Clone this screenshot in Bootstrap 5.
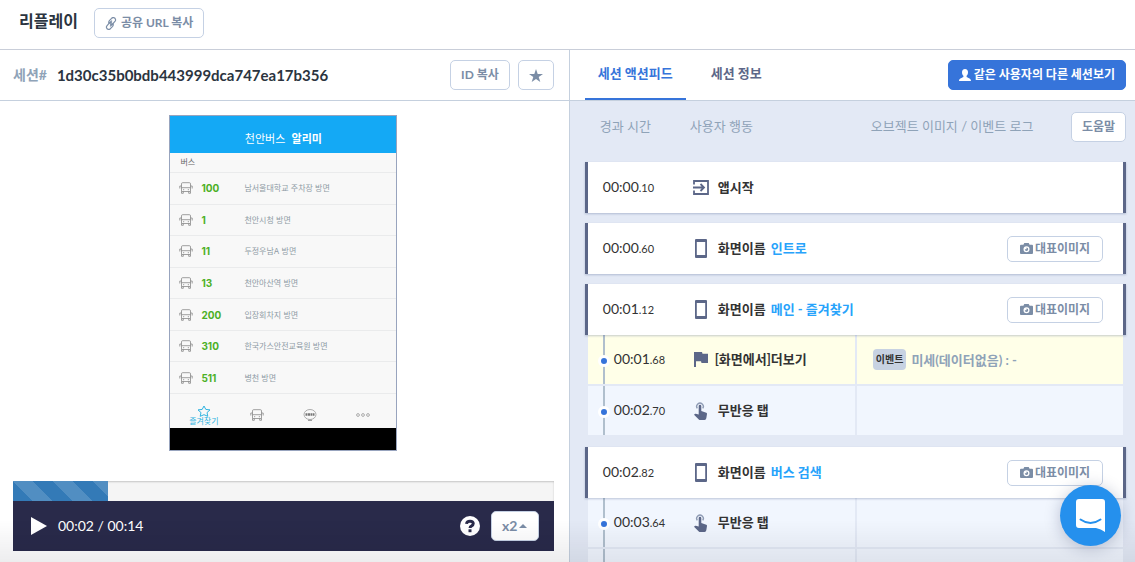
<!DOCTYPE html>
<html lang="ko">
<head>
<meta charset="utf-8">
<meta name="viewport" content="width=device-width, initial-scale=1">
<title>리플레이</title>
<link href="https://cdn.jsdelivr.net/npm/bootstrap@5.3.0/dist/css/bootstrap.min.css" rel="stylesheet">
<style>
  :root { --line: #c5d0de; --slate: #5c6788; --muted: #8fa3b8; --soft: #7b8da6; --blue: #3674da; --sky: #27a3fb; --feed: #e3e9f5; }
  body { font-family: Lato, "Noto Sans CJK KR", sans-serif; font-size: 13px; line-height: 20px; color: #333; background: #fff; }
  svg { display: block; flex: none; }
  a { text-decoration: none; }
  .mb-10 { margin-bottom: 10px; }
  .mb-12 { margin-bottom: 12px; }

  .app-bar { height: 50px; padding: 8px 19px 11px; border-bottom: 1px solid #c9ced9; }
  .app-title { font-size: 16px; font-weight: 700; color: #2b3440; line-height: 26px; }
  .pane-bar { height: 51px; border-bottom: 1px solid var(--line); flex: none; }
  .btn-line { --bs-btn-color: var(--soft); --bs-btn-bg: #fff; --bs-btn-border-color: #c5d1e4; --bs-btn-hover-color: var(--slate); --bs-btn-hover-border-color: #a9b8d0; --bs-btn-hover-bg: #fff; }
  .btn-tool { height: 30px; padding: 0 10px; font-size: 12px; font-weight: 700; border-radius: 5px; display: inline-flex; align-items: center; justify-content: center; line-height: 18px; white-space: nowrap; }
  .btn-thumb { height: 26px; width: 96px; padding: 0; gap: 2px; }
  .btn-user { --bs-btn-color: #fff; --bs-btn-bg: var(--blue); --bs-btn-border-color: var(--blue); --bs-btn-hover-color: #fff; --bs-btn-hover-bg: #2c63c0; gap: 3px; }
  .session-label { color: var(--muted); font-weight: 700; font-size: 14px; }
  .session-id { font-size: 15px; font-weight: 700; color: #2b3440; margin-left: 10px; }
  .pane-player { width: 50.2%; border-right: 1px solid var(--line); }
  .player-side { padding-left: 13px; padding-right: 15px; }

  .phone { width: 228px; height: 336px; margin-top: 14px; border: 1px solid #98a4be; background: #f8f8f8; font-family: Inter, "Noto Sans CJK KR", sans-serif; }
  .phone-head { height: 37px; background: #14a9f5; color: #fff; font-size: 11px; line-height: 16px; padding-top: 15px; }
  .phone-sub { height: 19px; padding-left: 10px; font-size: 8px; line-height: 19px; color: #666; }
  .phone-row { border-top: 1px solid #eaebec; padding-left: 9px; }
  .route-no { width: 43px; margin-left: 8px; font-size: 10px; font-weight: 700; color: #4cb026; }
  .route-to { font-size: 8px; color: #8e9ba5; }
  .phone-nav { height: 35px; border-top: 1px solid #eaebec; padding: 0 7px; }
  .phone-nav > div { flex: 1; color: #999; }
  .phone-nav .now { color: #2fb3e0; font-size: 8px; line-height: 8px; }
  .phone-foot { height: 22px; background: #000; }

  .player { margin-top: 30px; }
  .play-track { height: 20px; border-radius: 0; background: #f5f5f5; box-shadow: inset 0 1px 2px rgba(0,0,0,.2); }
  .play-done { background-color: #337ab7; background-size: 40px 40px; background-image: linear-gradient(45deg, rgba(255,255,255,.15) 25%, transparent 25%, transparent 50%, rgba(255,255,255,.15) 50%, rgba(255,255,255,.15) 75%, transparent 75%, transparent); }
  .play-bar { height: 50px; background: #292a4a; padding: 0 15px 0 18px; gap: 11px; color: #fff; font-size: 14px; }
  .btn-plain { border: 0; padding: 0; background: none; color: #fff; }
  .btn-speed { width: 48px; gap: 2px; font-size: 14px; }

  .feed { background: var(--feed); }
  .feed-side { padding-left: 15px; padding-right: 9px; }
  .feed-tabs { gap: 12px; }
  .feed-tab { color: var(--slate); font-weight: 700; padding: 13px 13px 0; height: 50px; border-bottom: 2px solid transparent; }
  .feed-tab.active { color: var(--blue); border-color: var(--blue); }
  .feed-cols { height: 61px; padding: 11px 0 20px 15px; color: var(--muted); }
  .col-time { width: 90px; flex: none; }
  .col-act { width: 181px; flex: none; }
  .step { height: 51px; background: #fff; border: solid var(--slate); border-width: 0 3px; padding: 0 20px 0 15px; box-shadow: 0 1px 2px rgba(60,80,130,.3); position: relative; }
  .clock { font-size: 14px; width: 89px; flex: none; }
  .clock small { font-size: 11px; }
  .act-name { font-weight: 700; padding-bottom: 2px; }
  .act-name a { color: var(--sky); margin-left: 2px; }
  .act-icon { width: 18px; margin-right: 8px; display: flex; justify-content: center; color: var(--slate); }
  .act-icon.flag { margin-right: 5px; }
  .sub { height: 49px; margin: 0 3px; gap: 2px; }
  .sub + .sub { margin-top: 2px; }
  .sub-act { width: 267px; flex: none; background: #f1f6fe; padding-left: 15px; }
  .sub-log { background: #f1f6fe; padding-left: 16px; }
  .sub.hot > div { background: #ffffe8; }
  .rail { width: 2px; background: #b0bfcd; flex: none; margin-right: 9px; display: flex; align-items: center; justify-content: center; }
  .rail i { width: 12px; height: 12px; border: 3px solid #fff; border-radius: 50%; background: var(--blue); flex: none; margin-top: 2px; }
  .sub .clock { width: 78px; }
  .tag { background: #c7d2e2; color: #333; font-size: 10px; font-weight: 700; border-radius: 4px; height: 21px; line-height: 20px; padding: 0 3px; margin-right: 5px; }
  .log-text { color: var(--muted); font-weight: 700; }

  .chat { right: 14px; bottom: 16px; width: 61px; height: 61px; border: 0; border-radius: 50%; background: #2590ed; box-shadow: 0 2px 16px rgba(20,30,80,.25); padding: 0; z-index: 5; }
  .shade { height: 42px; background: linear-gradient(rgba(0,0,20,0), rgba(0,0,20,.07)); pointer-events: none; z-index: 4; }
</style>
</head>
<body class="vh-100 overflow-hidden d-flex flex-column">
<svg width="0" height="0" class="position-absolute" aria-hidden="true">
  <symbol id="bus" viewBox="0 0 14 12"><path d="M2.500 9.500V1.800Q2.500.7 3.600.7h6.800q1.100 0 1.100 1.100v7.700zM2.500 5.700h9M2.500 9.500v1.800h1.800V9.500M9.700 9.500v1.800h1.800V9.500M2.500 4H.8v2.500M11.500 4h1.700v2.500M4 7.700h1.200M8.800 7.700H10" fill="none" stroke="#888" stroke-width=".8"/></symbol>
  <symbol id="device" viewBox="0 0 12 19"><path fill="currentColor" fill-rule="evenodd" d="M1 0h10q1 0 1 1v17q0 1-1 1H1q-1 0-1-1V1Q0 0 1 0zm.8 3v13h8.400V3z"/></symbol>
  <symbol id="tap" viewBox="0 0 14 18"><path d="M3.300 6.300a3.300 3.300 0 1 1 5.400 0" fill="none" stroke="#8d9ab3" stroke-width="1.400"/><path fill="currentColor" d="M4.700 4a1.300 1.300 0 0 1 2.600 0v5l5 1.700q.9.400.7 1.400l-.7 4.200Q12 18 10.600 18H6.200q-.8 0-1.400-.6L0 12.700l.8-.8q.4-.4 1-.2l2.900.8z"/></symbol>
  <symbol id="camera" viewBox="0 0 13 11"><path fill="currentColor" fill-rule="evenodd" d="M4.300 0h4.400l.9 1.800H12q1 0 1 1V10q0 1-1 1H1q-1 0-1-1V2.800q0-1 1-1h2.400zM6.500 3.300a3 3 0 1 0 0 6 3 3 0 0 0 0-6zm0 1.300a1.700 1.700 0 1 1-1.700 1.700h1.700z"/></symbol>
</svg>

<header class="app-bar d-flex align-items-start flex-shrink-0">
  <h1 class="app-title m-0 me-3">리플레이</h1>
  <button type="button" class="btn btn-line btn-tool gap-1">
    <svg width="12" height="13" viewBox="0 0 12 13" fill="none" stroke="currentColor" stroke-width="1.200"><path d="M4.200 6.500Q3.200 5 4.400 3.600L6.600 1.400a2.200 2.200 0 0 1 3.900.9q.3 1-.4 1.900L7.600 7.100a1.500 1.500 0 0 1-2.300-1.900L7 3.600"/><path d="M7.800 6.500q1 1.500-.2 2.900l-2.200 2.200a2.200 2.200 0 0 1-3.900-.9q-.3-1 .4-1.900l2.500-2.900a1.500 1.500 0 0 1 2.300 1.900L5 9.400"/></svg>
    <span>공유 URL 복사</span>
  </button>
</header>

<main class="row g-0 flex-grow-1 overflow-hidden">
  <section class="col-auto pane-player d-flex flex-column">
    <div class="pane-bar player-side d-flex align-items-center">
      <span class="session-label">세션#</span>
      <span class="session-id me-auto">1d30c35b0bdb443999dca747ea17b356</span>
      <button type="button" class="btn btn-line btn-tool me-2">ID 복사</button>
      <button type="button" class="btn btn-line btn-tool" aria-label="즐겨찾기">
        <svg width="14" height="13" viewBox="0 0 14 13"><path fill="currentColor" d="m7 0 1.700 4.900H14L9.700 8l1.600 5L7 9.900 2.700 13l1.600-5L0 4.900h5.300z"/></svg>
      </button>
    </div>
    <div class="player-side flex-grow-1 d-flex flex-column">
      <div class="phone mx-auto d-flex flex-column">
        <div class="phone-head text-center">천안버스 &nbsp;<b>알리미</b></div>
        <div class="phone-sub">버스</div>
        <div class="flex-grow-1 d-flex flex-column">
          <div class="phone-row flex-fill d-flex align-items-center"><svg width="14" height="12"><use href="#bus"/></svg><span class="route-no">100</span><span class="route-to">남서울대학교 주차장 방면</span></div>
          <div class="phone-row flex-fill d-flex align-items-center"><svg width="14" height="12"><use href="#bus"/></svg><span class="route-no">1</span><span class="route-to">천안시청 방면</span></div>
          <div class="phone-row flex-fill d-flex align-items-center"><svg width="14" height="12"><use href="#bus"/></svg><span class="route-no">11</span><span class="route-to">두정우남A 방면</span></div>
          <div class="phone-row flex-fill d-flex align-items-center"><svg width="14" height="12"><use href="#bus"/></svg><span class="route-no">13</span><span class="route-to">천안아산역 방면</span></div>
          <div class="phone-row flex-fill d-flex align-items-center"><svg width="14" height="12"><use href="#bus"/></svg><span class="route-no">200</span><span class="route-to">입장회차지 방면</span></div>
          <div class="phone-row flex-fill d-flex align-items-center"><svg width="14" height="12"><use href="#bus"/></svg><span class="route-no">310</span><span class="route-to">한국가스안전교육원 방면</span></div>
          <div class="phone-row flex-fill d-flex align-items-center"><svg width="14" height="12"><use href="#bus"/></svg><span class="route-no">511</span><span class="route-to">병천 방면</span></div>
        </div>
        <div class="phone-nav d-flex align-items-center">
          <div class="now d-flex flex-column align-items-center pt-2"><svg width="14" height="12" viewBox="0 0 14 12" fill="none" stroke="currentColor"><path d="m7 1 1.800 3.400 4.200.5-3 2.700.8 3.700L7 9.700l-3.800 1.600.8-3.700-3-2.700 4.200-.5z"/></svg>즐겨찾기</div>
          <div class="d-flex justify-content-center pt-2"><svg width="14" height="12"><use href="#bus"/></svg></div>
          <div class="d-flex justify-content-center pt-2"><svg width="14" height="12" viewBox="0 0 14 12"><ellipse cx="7" cy="5.500" rx="6" ry="5" fill="none" stroke="#999" stroke-width=".8"/><path d="M2.500 5.500h9" stroke="#777" stroke-width="2.500" stroke-dasharray="2 .5"/><path d="M5 11.300h4" stroke="#888"/></svg></div>
          <div class="d-flex justify-content-center pt-2"><svg width="14" height="6" viewBox="0 0 14 6" fill="none" stroke="#999" stroke-width=".8"><circle cx="2" cy="3" r="1.400"/><circle cx="7" cy="3" r="1.400"/><circle cx="12" cy="3" r="1.400"/></svg></div>
        </div>
        <div class="phone-foot"></div>
      </div>
      <div class="player">
        <div class="play-track progress"><div class="play-done progress-bar" role="progressbar" aria-label="재생 위치" aria-valuenow="17" aria-valuemin="0" aria-valuemax="100" style="width:17.500%"></div></div>
        <div class="play-bar d-flex align-items-center">
          <button type="button" class="btn-plain" aria-label="재생"><svg width="16" height="18" viewBox="0 0 16 18"><path fill="#fff" d="m0 0 16 9-16 9z"/></svg></button>
          <span class="me-auto">00:02 / 00:14</span>
          <button type="button" class="btn-plain" aria-label="도움말"><svg width="20" height="20" viewBox="0 0 20 20"><circle cx="10" cy="10" r="10" fill="#fff"/><path d="M6.500 7.800Q6.800 5.200 10 5.200t3.300 2.400q0 1.400-1.700 2.300-1.600.8-1.600 2.100" fill="none" stroke="#292a4a" stroke-width="2.900"/><path fill="#292a4a" d="M8.500 13.300h3v2.900h-3z"/></svg></button>
          <button type="button" class="btn btn-line btn-tool btn-speed">x2<svg width="8" height="4" viewBox="0 0 8 4"><path fill="currentColor" d="M0 4 4 0l4 4z"/></svg></button>
        </div>
      </div>
    </div>
  </section>

  <section class="col feed d-flex flex-column overflow-hidden">
    <div class="pane-bar feed-side bg-white d-flex">
      <nav class="feed-tabs d-flex me-auto">
        <a href="#feed" class="feed-tab active">세션 액션피드</a>
        <a href="#info" class="feed-tab">세션 정보</a>
      </nav>
      <button type="button" class="btn btn-user btn-tool align-self-center">
        <svg width="12" height="12" viewBox="0 0 12 12"><path fill="currentColor" d="M6 0c2 0 3 1.500 3 3.200C9 5 8.300 6 7.600 6.800v1.100c1 .8 4.400 1.200 4.400 4.100H0c0-2.900 3.400-3.300 4.400-4.100V6.800C3.700 6 3 5 3 3.200 3 1.500 4 0 6 0z"/></svg>
        <span>같은 사용자의 다른 세션보기</span>
      </button>
    </div>
    <div class="feed-side" id="feed">
      <div class="feed-cols d-flex">
        <span class="col-time mt-1">경과 시간</span><span class="col-act mt-1">사용자 행동</span><span class="mt-1 me-auto">오브젝트 이미지 / 이벤트 로그</span>
        <button type="button" class="btn btn-line btn-tool">도움말</button>
      </div>
      <article class="mb-10">
        <div class="step d-flex align-items-center"><span class="clock">00:00<small>.10</small></span><span class="act-icon"><svg width="16" height="15" viewBox="0 0 16 15" fill="none" stroke="currentColor" stroke-width="1.800"><path d="M1 4.500V1h14v13H1v-3.500M0 7.500h10.500M7.500 4l3.500 3.500L7.500 11"/></svg></span><span class="act-name">앱시작</span></div>
      </article>
      <article class="mb-10">
        <div class="step d-flex align-items-center"><span class="clock">00:00<small>.60</small></span><span class="act-icon"><svg width="12" height="19"><use href="#device"/></svg></span><span class="act-name">화면이름 <a href="#intro">인트로</a></span><button type="button" class="btn btn-line btn-tool btn-thumb ms-auto"><svg width="13" height="11"><use href="#camera"/></svg>대표이미지</button></div>
      </article>
      <article class="mb-12">
        <div class="step d-flex align-items-center"><span class="clock">00:01<small>.12</small></span><span class="act-icon"><svg width="12" height="19"><use href="#device"/></svg></span><span class="act-name">화면이름 <a href="#main">메인 - 즐겨찾기</a></span><button type="button" class="btn btn-line btn-tool btn-thumb ms-auto"><svg width="13" height="11"><use href="#camera"/></svg>대표이미지</button></div>
        <div class="sub hot d-flex">
          <div class="sub-act d-flex"><span class="rail"><i></i></span><span class="clock align-self-center">00:01<small>.68</small></span><span class="act-icon flag align-self-center"><svg width="14" height="15" viewBox="0 0 14 15"><path fill="currentColor" d="M0 0h8l.5 1.700H14V11H7.500L7 9.300H2V15H0z"/></svg></span><span class="act-name align-self-center">[화면에서]더보기</span></div>
          <div class="sub-log flex-grow-1 d-flex align-items-center"><span class="tag">이벤트</span><span class="log-text">미세(데이터없음) : -</span></div>
        </div>
        <div class="sub d-flex">
          <div class="sub-act d-flex"><span class="rail"><i></i></span><span class="clock align-self-center">00:02<small>.70</small></span><span class="act-icon align-self-center"><svg width="14" height="18"><use href="#tap"/></svg></span><span class="act-name align-self-center">무반응 탭</span></div>
          <div class="sub-log flex-grow-1"></div>
        </div>
      </article>
      <article>
        <div class="step d-flex align-items-center"><span class="clock">00:02<small>.82</small></span><span class="act-icon"><svg width="12" height="19"><use href="#device"/></svg></span><span class="act-name">화면이름 <a href="#search">버스 검색</a></span><button type="button" class="btn btn-line btn-tool btn-thumb ms-auto"><svg width="13" height="11"><use href="#camera"/></svg>대표이미지</button></div>
        <div class="sub d-flex">
          <div class="sub-act d-flex"><span class="rail"><i></i></span><span class="clock align-self-center">00:03<small>.64</small></span><span class="act-icon align-self-center"><svg width="14" height="18"><use href="#tap"/></svg></span><span class="act-name align-self-center">무반응 탭</span></div>
          <div class="sub-log flex-grow-1"></div>
        </div>
        <div class="sub d-flex">
          <div class="sub-act d-flex"><span class="rail"></span></div>
          <div class="sub-log flex-grow-1"></div>
        </div>
      </article>
    </div>
  </section>
</main>

<div class="shade position-fixed bottom-0 start-0 end-0"></div>
<button type="button" class="chat position-fixed d-flex align-items-center justify-content-center" aria-label="채팅">
  <svg width="29" height="33" viewBox="0 0 29 33"><path fill="#fff" d="M3 0h23q3 0 3 3v30q-4-3-9-4H3q-3 0-3-3V3q0-3 3-3z"/><path d="M4.500 20.500q10 7 20 0" fill="none" stroke="#2590ed" stroke-width="2" stroke-linecap="round"/></svg>
</button>
<script src="https://cdn.jsdelivr.net/npm/bootstrap@5.3.0/dist/js/bootstrap.bundle.min.js"></script>
</body>
</html>
